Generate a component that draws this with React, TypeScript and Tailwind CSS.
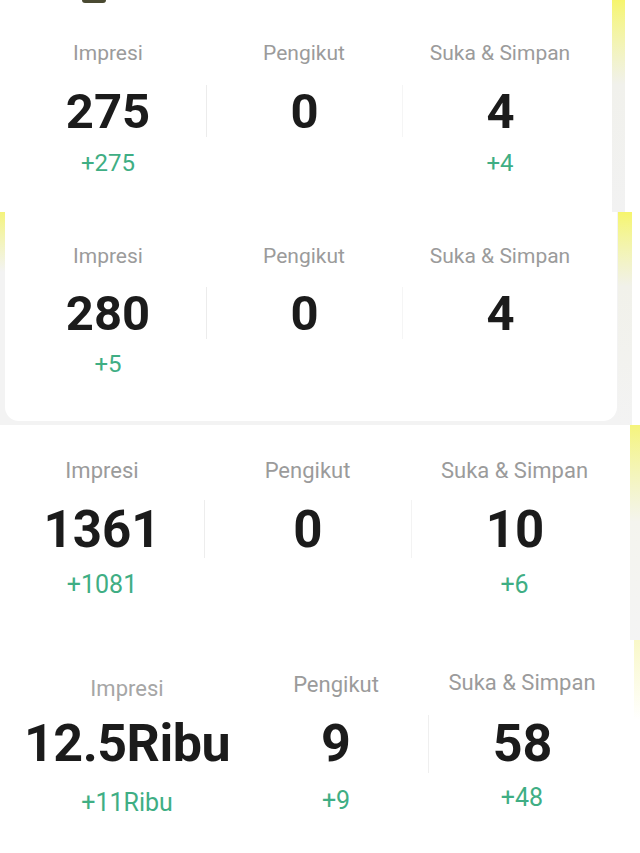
import type { ReactNode } from "react"

// one stat column: label, big number (optionally with a divider on its left), green delta
function Stat({
  className,
  label,
  value,
  delta,
  labelClass,
  rowClass,
  valueClass,
  deltaClass,
}: {
  className: string
  label: string
  value: string
  delta?: string
  labelClass: string
  rowClass: string
  valueClass: string
  deltaClass: string
}) {
  return (
    <div className={"flex shrink-0 flex-col items-center " + className}>
      <div className={"whitespace-nowrap text-[#9b9b9b] " + labelClass}>{label}</div>
      <div className={"flex w-full items-center justify-center " + rowClass}>
        <span className={"whitespace-nowrap font-bold leading-none text-[#1b1b1b] " + valueClass}>{value}</span>
      </div>
      {delta && <div className={"whitespace-nowrap text-[#3fae84] " + deltaClass}>{delta}</div>}
    </div>
  )
}

function Stripe({ className }: { className: string }) {
  return <div className={"shrink-0 " + className} />
}

function Strip({ className, children }: { className: string; children: ReactNode }) {
  return <div className={"flex w-full shrink-0 " + className}>{children}</div>
}

export default function App() {
  return (
    <div className="flex h-[853px] w-[640px] flex-col overflow-hidden bg-white font-['Roboto',sans-serif]">
      {/* Strip 1 */}
      <Strip className="h-[212px] bg-white">
        <div className="flex w-[612px] flex-col">
          <div className="ml-[82px] h-[3px] w-[24px] rounded-b-full bg-[#4a4a32]" />
          <div className="flex pl-[10px]">
            <Stat
              className="w-[196px] pt-[38px]"
              label="Impresi"
              value="275"
              delta="+275"
              labelClass="text-[21px] leading-[24px]"
              rowClass="mt-[20px] h-[52px]"
              valueClass="text-[49px]"
              deltaClass="mt-[12px] text-[24px] leading-[28px]"
            />
            <Stat
              className="w-[196px] pt-[38px]"
              label="Pengikut"
              value="0"
              labelClass="text-[21px] leading-[24px]"
              rowClass="mt-[20px] h-[52px] border-l border-[#ececec]"
              valueClass="text-[49px]"
              deltaClass=""
            />
            <Stat
              className="w-[196px] pt-[38px]"
              label="Suka & Simpan"
              value="4"
              delta="+4"
              labelClass="text-[21px] leading-[24px]"
              rowClass="mt-[20px] h-[52px] border-l border-[#f5f5f5]"
              valueClass="text-[49px]"
              deltaClass="mt-[12px] text-[24px] leading-[28px]"
            />
          </div>
        </div>
        <Stripe className="w-[13px] bg-gradient-to-b from-[#f6f56c] via-[#f1f1ec] via-40% to-[#f2f2f2]" />
        <div className="flex-1 bg-white" />
      </Strip>

      {/* Strip 2 */}
      <Strip className="h-[213px] bg-[#f3f3f3]">
        <Stripe className="h-[60px] w-[5px] bg-gradient-to-b from-[#f4f37a] to-[#f3f3f3]" />
        <div className="flex h-[209px] w-[612px] rounded-b-[14px] bg-white pl-[5px]">
          <Stat
            className="w-[196px] pt-[32px]"
            label="Impresi"
            value="280"
            delta="+5"
            labelClass="text-[21px] leading-[24px]"
            rowClass="mt-[19px] h-[52px]"
            valueClass="text-[49px]"
            deltaClass="mt-[11px] text-[24px] leading-[28px]"
          />
          <Stat
            className="w-[196px] pt-[32px]"
            label="Pengikut"
            value="0"
            labelClass="text-[21px] leading-[24px]"
            rowClass="mt-[19px] h-[52px] border-l border-[#ececec]"
            valueClass="text-[49px]"
            deltaClass=""
          />
          <Stat
            className="w-[196px] pt-[32px]"
            label="Suka & Simpan"
            value="4"
            labelClass="text-[21px] leading-[24px]"
            rowClass="mt-[19px] h-[52px] border-l border-[#f5f5f5]"
            valueClass="text-[49px]"
            deltaClass=""
          />
        </div>
        <div className="w-[1px] shrink-0" />
        <Stripe className="w-[14px] bg-gradient-to-b from-[#f6f56c] via-[#f1f1ea] via-35% to-[#f3f3f3]" />
        <div className="flex-1 bg-white" />
      </Strip>

      {/* Strip 3 */}
      <Strip className="h-[215px] bg-white">
        <div className="flex w-[630px] bg-white">
          <Stat
            className="w-[204px] pt-[33px]"
            label="Impresi"
            value="1361"
            delta="+1081"
            labelClass="text-[22px] leading-[26px]"
            rowClass="mt-[16px] h-[58px]"
            valueClass="text-[51px]"
            deltaClass="mt-[13px] text-[25px] leading-[28px]"
          />
          <Stat
            className="w-[207px] pt-[33px]"
            label="Pengikut"
            value="0"
            labelClass="text-[22px] leading-[26px]"
            rowClass="mt-[16px] h-[58px] border-l border-[#ededed]"
            valueClass="text-[51px]"
            deltaClass=""
          />
          <Stat
            className="w-[207px] pt-[33px]"
            label="Suka & Simpan"
            value="10"
            delta="+6"
            labelClass="text-[22px] leading-[26px]"
            rowClass="mt-[16px] h-[58px] border-l border-[#f3f3f3]"
            valueClass="text-[51px]"
            deltaClass="mt-[13px] text-[25px] leading-[28px]"
          />
        </div>
        <Stripe className="w-[10px] bg-gradient-to-b from-[#f5f47c] via-[#f4f4ee] via-45% to-[#f4f4f4]" />
      </Strip>

      {/* Strip 4 */}
      <Strip className="h-[213px] bg-white">
        <div className="flex w-[634px]">
          <Stat
            className="w-[254px] pt-[36px]"
            label="Impresi"
            value="12.5Ribu"
            delta="+11Ribu"
            labelClass="text-[22px] leading-[26px] text-[#a6a6a6]"
            rowClass="mt-[13px] h-[58px]"
            valueClass="text-[52px] tracking-[-0.5px]"
            deltaClass="mt-[16px] text-[25px] leading-[28px]"
          />
          <Stat
            className="w-[174px] pr-[10px] pt-[32px]"
            label="Pengikut"
            value="9"
            delta="+9"
            labelClass="text-[22px] leading-[26px]"
            rowClass="mt-[17px] h-[58px]"
            valueClass="text-[52px]"
            deltaClass="mt-[14px] text-[25px] leading-[28px]"
          />
          <Stat
            className="w-[188px] pt-[30px]"
            label="Suka & Simpan"
            value="58"
            delta="+48"
            labelClass="text-[22px] leading-[26px]"
            rowClass="mt-[19px] h-[58px] border-l border-[#efefef]"
            valueClass="text-[52px]"
            deltaClass="mt-[11px] text-[25px] leading-[28px]"
          />
        </div>
        <Stripe className="h-[80px] w-[6px] bg-gradient-to-b from-[#f9f8c8] to-white" />
      </Strip>
    </div>
  )
}
